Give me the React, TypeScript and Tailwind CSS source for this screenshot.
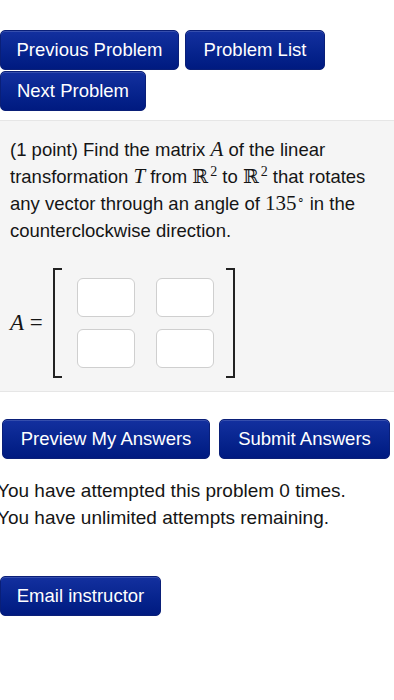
import React from 'react';

const btn =
  'h-[40px] px-[12px] rounded-[5px] border border-[#0a1f78] bg-gradient-to-b from-[#13309f] to-[#001a80] text-white text-[18.5px] leading-none whitespace-nowrap shadow-[inset_0_1px_0_rgba(255,255,255,0.15)]';

function Cell() {
  return <div className="w-[58px] h-[39px] rounded-[6px] border border-[#cfcfcf] bg-white" />;
}

function Bracket({ side }: { side: 'left' | 'right' }) {
  return (
    <div
      className={`w-[9px] h-[110px] border-y-[2px] border-[#222] ${
        side === 'left' ? 'border-l-[2px]' : 'border-r-[2px]'
      }`}
    />
  );
}

export default function App() {
  return (
    <div className="w-[394px] min-h-[700px] bg-white text-[#151515] font-['Liberation_Sans',Arial,sans-serif]">
      {/* navigation */}
      <div className="pt-[30px] flex flex-wrap gap-x-[6px] gap-y-[1px] w-[330px]">
        <button className={`${btn} w-[179px]`}>Previous Problem</button>
        <button className={`${btn} w-[140px]`}>Problem List</button>
        <button className={`${btn} w-[146px]`}>Next Problem</button>
      </div>

      {/* problem */}
      <div className="mt-[9px] bg-[#f5f5f5] border-y border-[#e6e6e6] pl-[10px] pr-[2px] pt-[15px] h-[272px]">
        <p className="text-[18.5px] leading-[27px]">
          (1 point) Find the matrix{' '}
          <span className="font-['Liberation_Serif',serif] italic text-[21px]">A</span> of the linear
          transformation <span className="font-['Liberation_Serif',serif] italic text-[21px]">T</span>{' '}
          from <span className="font-['DejaVu_Serif',serif] text-[19px]">ℝ</span>
          <sup className="font-['Liberation_Serif',serif] text-[14px] ml-[2px]">2</sup> to{' '}
          <span className="font-['DejaVu_Serif',serif] text-[19px]">ℝ</span>
          <sup className="font-['Liberation_Serif',serif] text-[14px] ml-[2px]">2</sup> that rotates any
          vector through an angle of{' '}
          <span className="font-['Liberation_Serif',serif] text-[21px]">
            135<sup className="text-[12px]">∘</sup>
          </span>{' '}
          in the counterclockwise direction.
        </p>

        <div className="mt-[24px] flex items-center">
          <span className="font-['Liberation_Serif',serif] text-[23px] mr-[10px]">
            <span className="italic">A</span> =
          </span>
          <Bracket side="left" />
          <div className="grid grid-cols-2 gap-x-[21px] gap-y-[12px] pl-[15px] pr-[12px]">
            <Cell />
            <Cell />
            <Cell />
            <Cell />
          </div>
          <Bracket side="right" />
        </div>
      </div>

      {/* submit */}
      <div className="mt-[27px] flex gap-[9px] pl-[2px]">
        <button className={`${btn} w-[208px]`}>Preview My Answers</button>
        <button className={`${btn} w-[171px]`}>Submit Answers</button>
      </div>

      <div className="mt-[18px] -ml-[3px] text-[19px] leading-[27px] whitespace-nowrap">
        <p>You have attempted this problem 0 times.</p>
        <p>You have unlimited attempts remaining.</p>
      </div>

      <div className="mt-[45px]">
        <button className={`${btn} w-[161px]`}>Email instructor</button>
      </div>
    </div>
  );
}
